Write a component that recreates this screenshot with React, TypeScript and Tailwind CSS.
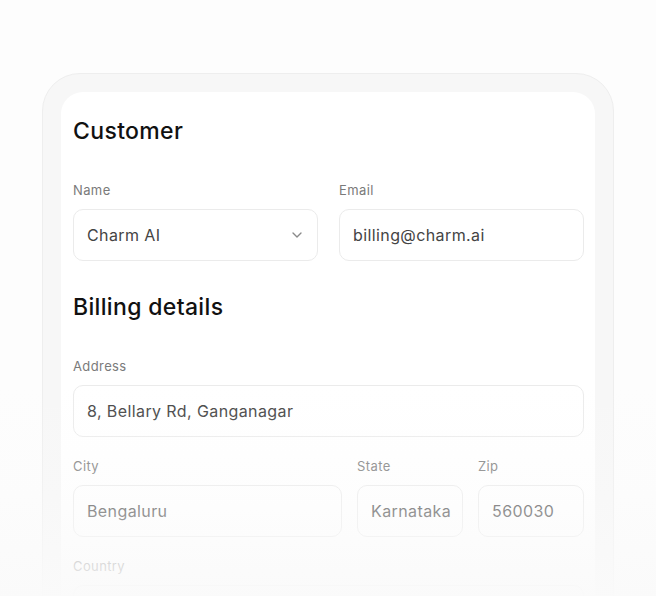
import { ChevronDown } from "lucide-react";

function Label({ children }: { children: React.ReactNode }) {
  return <div className="text-[13px] leading-[18px] tracking-[0.03em] text-[#7a7a7a]">{children}</div>;
}

function Field({ value, select }: { value?: string; select?: boolean }) {
  return (
    <div className="mt-[10px] flex h-[52px] items-center justify-between whitespace-nowrap rounded-[10px] border border-[#ebebeb] bg-white pl-[13px] pr-3 text-[16px] tracking-[0.025em] text-[#444]">
      <span>{value}</span>
      {select && <ChevronDown className="h-4 w-4 text-[#8a8a8a]" strokeWidth={2} />}
    </div>
  );
}

export default function App() {
  return (
    <div className="relative h-[596px] overflow-hidden bg-[#fdfdfd] font-['Inter',sans-serif]">
      <div className="mx-auto mt-[73px] w-[572px] rounded-[38px] border border-[#eeeeee] bg-[#f7f7f7] p-[18px]">
        <div className="rounded-[22px] bg-white pb-10 pl-3 pr-[11px] pt-[25px]">
          <h2 className="text-[23px] font-medium leading-7 tracking-[0.015em] text-[#111]">Customer</h2>

          <div className="mt-9 grid grid-cols-2 gap-[21px]">
            <div>
              <Label>Name</Label>
              <Field value="Charm AI" select />
            </div>
            <div>
              <Label>Email</Label>
              <Field value="billing@charm.ai" />
            </div>
          </div>

          <h2 className="mt-[32px] text-[23px] font-medium leading-7 tracking-[0.015em] text-[#111]">Billing details</h2>

          <div className="mt-9">
            <Label>Address</Label>
            <Field value="8, Bellary Rd, Ganganagar" />
          </div>

          <div className="mt-[20px] grid grid-cols-[269px_106px_106px] gap-[15px]">
            <div>
              <Label>City</Label>
              <Field value="Bengaluru" />
            </div>
            <div>
              <Label>State</Label>
              <Field value="Karnataka" />
            </div>
            <div>
              <Label>Zip</Label>
              <Field value="560030" />
            </div>
          </div>

          <div className="mt-[20px]">
            <Label>Country</Label>
            <Field />
          </div>
        </div>
      </div>

      {/* fade out the bottom of the card */}
      <div className="pointer-events-none absolute inset-x-0 bottom-0 h-[210px] bg-gradient-to-b from-[#fafafa]/0 via-[#fafafa]/30 to-[#fafafa]/95" />
    </div>
  );
}
